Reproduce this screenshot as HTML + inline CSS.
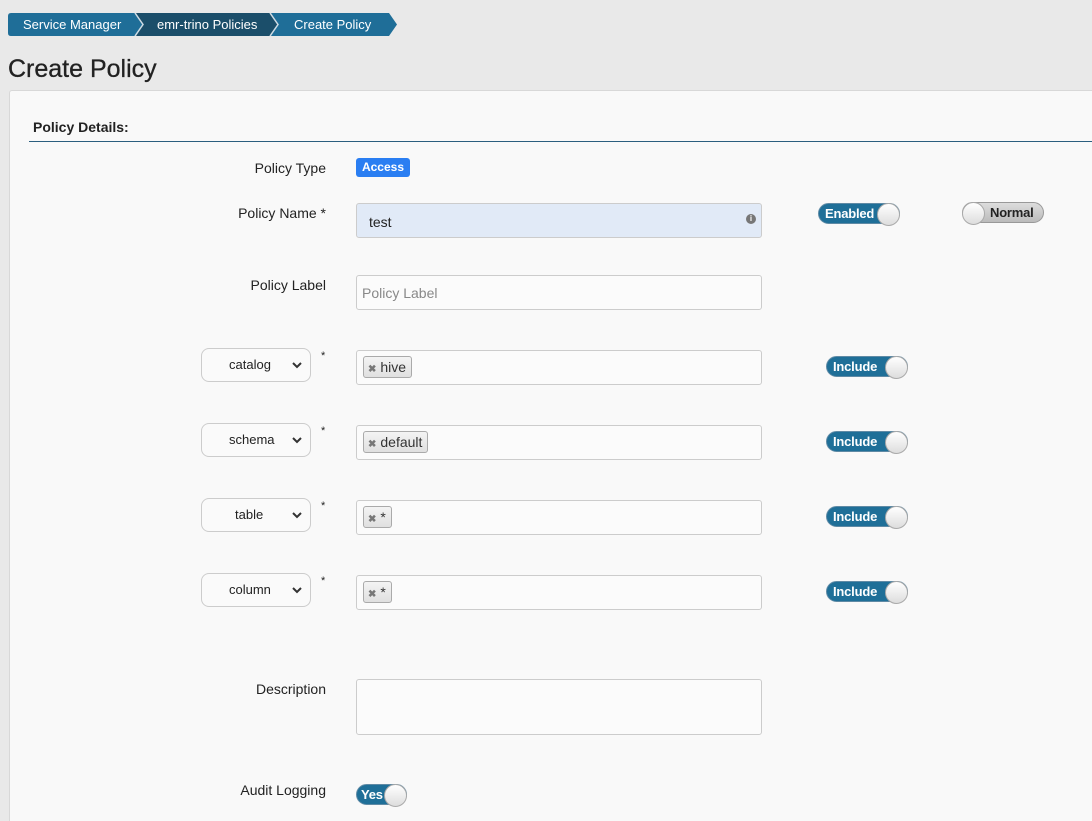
<!DOCTYPE html>
<html><head><style>
*{box-sizing:border-box;margin:0;padding:0}
html,body{width:1092px;height:821px;overflow:hidden}
body{background:#e9e9e9;font-family:"Liberation Sans",Arial,sans-serif;color:#222;position:relative}
.bc{position:absolute;top:13px;height:23px;color:#fff;font-size:13px;line-height:23px;white-space:nowrap}
.bc span{position:absolute;top:0;height:23px;white-space:nowrap}
h1{position:absolute;left:8px;top:55px;font-size:25px;font-weight:normal;color:#222;-webkit-text-stroke:0.3px #222}
.panel{position:absolute;left:9px;top:90px;width:1100px;height:760px;background:#f9f9f9;border:1px solid #d8d8d8;border-radius:3px}
.pd{position:absolute;left:33px;top:119px;font-size:14px;font-weight:bold}
.hr{position:absolute;left:29px;top:141px;width:1070px;height:1px;background:#2b5f7f}
.lbl{position:absolute;right:766px;font-size:14px;color:#222;text-align:right}
.in{position:absolute;left:356px;width:406px;height:35px;border:1px solid #ccc;border-radius:3px;background:#fbfbfb;font-size:14px}
.tag{position:absolute;left:6px;top:5px;height:22px;border:1px solid #aaa;border-radius:3px;background:linear-gradient(#f4f4f4,#e0e0e0);font-size:14px;line-height:20px;padding:0 5px 0 4px;color:#333}
.tag b{color:#777;font-size:10px;margin-right:4px}
.sel{position:absolute;left:201px;width:110px;height:34px;border:1px solid #ccc;border-radius:8px;background:#fafafa;font-size:13px;line-height:32px;padding-left:27px}
.sel svg{position:absolute;right:8px;top:13px}
.ast{position:absolute;left:321px;font-size:11px}
.tg{position:absolute;height:21px;border-radius:11px;background:#1f6f98;color:#fff;font-size:13px;font-weight:bold;line-height:20px;padding-left:6px;border:1px solid #5f8aa5;letter-spacing:-0.2px}
.tg:after{content:"";position:absolute;right:-1px;top:-1px;width:21px;height:21px;border-radius:50%;background:linear-gradient(#fff,#ddd);border:1px solid #aaa}
.tg.l:after{left:-1px;right:auto}
</style></head><body>
<div class="bc">
<svg style="position:absolute;left:8px;top:0" width="390" height="23"><path d="M3 0H128L135 11.5 128 23H3Q0 23 0 20V3Q0 0 3 0Z" fill="#1f6e98"/><path d="M128 0H263L270 11.5 263 23H128L135 11.5Z" fill="#1b4e6a"/><path d="M263 0H381L389 11.5 381 23H263L270 11.5Z" fill="#1f6e98"/><path d="M127 0L135 11.5 127 23M262 0L270 11.5 262 23" stroke="#cfdbe3" stroke-width="1.5" fill="none"/></svg>
<span style="left:23px">Service Manager</span><span style="left:157px">emr-trino Policies</span><span style="left:294px">Create Policy</span></div>
<h1>Create Policy</h1>
<div class="panel"></div>
<div class="pd">Policy Details:</div>
<div class="hr"></div>
<div class="lbl" style="top:160px">Policy Type</div>
<div style="position:absolute;left:356px;top:158px;width:54px;height:19px;background:#2a7ef2;border-radius:3px;color:#fff;font-size:12px;font-weight:bold;text-align:center;line-height:19px">Access</div>
<div class="lbl" style="top:205px">Policy Name *</div>
<div class="in" style="top:203px;background:#e1eaf7;padding:10px 12px">test<span style="position:absolute;right:5px;top:10px;width:10px;height:10px;border-radius:50%;background:#777;color:#fff;font-size:8px;text-align:center;line-height:10px;font-weight:bold">i</span></div>
<div class="tg" style="left:818px;top:203px;width:82px">Enabled</div>
<div class="tg l" style="left:962px;top:202px;width:82px;background:linear-gradient(#ddd,#bbb);color:#222;border-color:#999;padding-left:27px">Normal</div>
<div class="lbl" style="top:277px">Policy Label</div>
<div class="in" style="top:275px;padding:9px 5px;color:#888">Policy Label</div>
<div class="sel" style="top:348px">catalog<svg width="10" height="7"><path d="M1 1L5 5 9 1" stroke="#333" stroke-width="2" fill="none"/></svg></div><div class="ast" style="top:350px">*</div>
<div class="in" style="top:350px"><div class="tag"><b>✖</b>hive</div></div>
<div class="tg" style="left:826px;top:356px;width:82px">Include</div>
<div class="sel" style="top:423px">schema<svg width="10" height="7"><path d="M1 1L5 5 9 1" stroke="#333" stroke-width="2" fill="none"/></svg></div><div class="ast" style="top:425px">*</div>
<div class="in" style="top:425px"><div class="tag"><b>✖</b>default</div></div>
<div class="tg" style="left:826px;top:431px;width:82px">Include</div>
<div class="sel" style="top:498px;padding-left:33px">table<svg width="10" height="7"><path d="M1 1L5 5 9 1" stroke="#333" stroke-width="2" fill="none"/></svg></div><div class="ast" style="top:500px">*</div>
<div class="in" style="top:500px"><div class="tag"><b>✖</b>*</div></div>
<div class="tg" style="left:826px;top:506px;width:82px">Include</div>
<div class="sel" style="top:573px">column<svg width="10" height="7"><path d="M1 1L5 5 9 1" stroke="#333" stroke-width="2" fill="none"/></svg></div><div class="ast" style="top:575px">*</div>
<div class="in" style="top:575px"><div class="tag"><b>✖</b>*</div></div>
<div class="tg" style="left:826px;top:581px;width:82px">Include</div>
<div class="lbl" style="top:681px">Description</div>
<div class="in" style="top:679px;height:56px"></div>
<div class="lbl" style="top:782px">Audit Logging</div>
<div class="tg" style="left:356px;top:784px;width:51px;padding-left:4px">Yes</div>
</body></html>
